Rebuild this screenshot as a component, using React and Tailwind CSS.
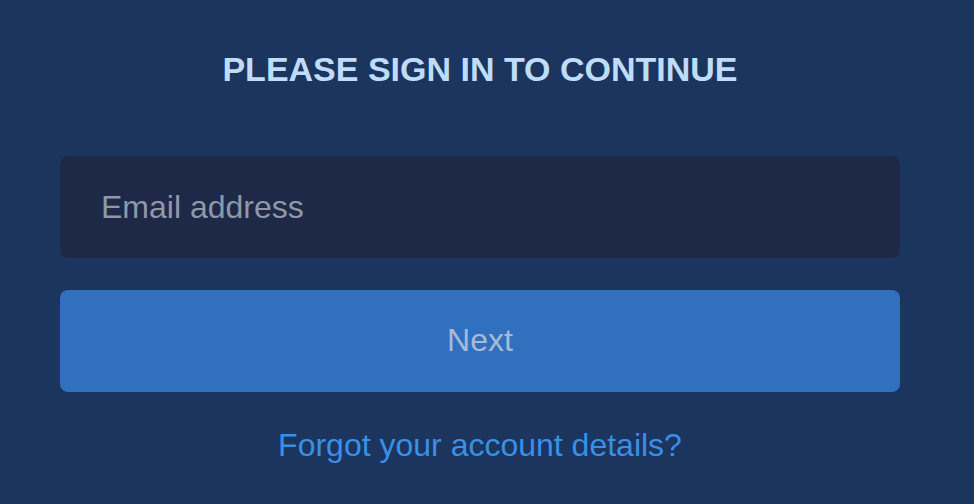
export default function App() {
  return (
    <div
      className="min-h-[504px] w-full bg-[#1c355e] pl-[60px] pr-[74px] pt-[49px]"
      style={{ fontFamily: '"Liberation Sans", Arial, sans-serif' }}
    >
      <h1 className="text-center text-[34px] font-bold leading-[40px] text-[#bfdcfb]">
        PLEASE SIGN IN TO CONTINUE
      </h1>
      <form className="mt-[67px] flex flex-col" onSubmit={(e) => e.preventDefault()}>
        <input
          type="email"
          placeholder="Email address"
          className="h-[102px] w-full rounded-lg bg-[#1e2947] px-[41px] text-[32px] text-[#c9d2e2] outline-none placeholder:text-[#8f97a8]"
        />
        <button
          type="submit"
          className="mt-[32px] h-[102px] w-full rounded-lg bg-[#3170be] pb-[2px] text-[32px] text-[#a7bbd6]"
        >
          Next
        </button>
      </form>
      <div className="mt-[33px] text-center text-[32px] leading-[40px]">
        <a href="#" className="text-[#3a8fe6]">
          Forgot your account details?
        </a>
      </div>
    </div>
  );
}
